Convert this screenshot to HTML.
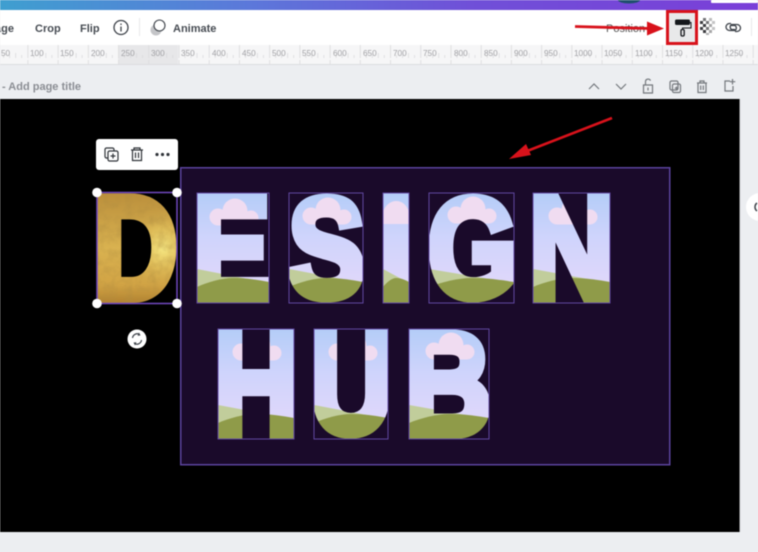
<!DOCTYPE html>
<html><head><meta charset="utf-8"><style>
html,body{margin:0;padding:0;width:758px;height:552px;overflow:hidden;background:#eceef1}
svg{display:block;filter:blur(.5px)}
.t{font-family:"Liberation Sans",sans-serif;font-weight:bold;font-size:11px;fill:#474c53}
.r{font-family:"Liberation Sans",sans-serif;font-size:8.2px;fill:#a0a0a4}
.l{font-family:"Liberation Sans",sans-serif;font-weight:bold;font-size:145px;fill:#fff;stroke:#fff;stroke-width:10;stroke-linejoin:miter;stroke-miterlimit:8}
.ic{fill:none;stroke:#74787d;stroke-width:1.2}
.ib{fill:none;stroke:#3d4249;stroke-width:1.3}
</style></head><body>
<svg width="758" height="552" viewBox="0 0 758 552" xmlns="http://www.w3.org/2000/svg">
<defs>
<linearGradient id="top" x1="0" x2="1" y1="0" y2="0"><stop offset="0" stop-color="#3f9fd0"/><stop offset=".33" stop-color="#5c78da"/><stop offset=".62" stop-color="#7050d8"/><stop offset="1" stop-color="#7a3fd8"/></linearGradient>
<linearGradient id="sky" x1="0" x2="0" y1="0" y2="1"><stop offset="0" stop-color="#b4cdf8"/><stop offset=".4" stop-color="#cfd4fc"/><stop offset="1" stop-color="#e6d9fa"/></linearGradient>
<linearGradient id="goldb" x1="0" x2="0" y1="0" y2="1"><stop offset="0" stop-color="#b88c3a"/><stop offset=".5" stop-color="#d9b250"/><stop offset=".8" stop-color="#d2a445"/><stop offset="1" stop-color="#a97a2c"/></linearGradient>
<radialGradient id="gold" gradientUnits="userSpaceOnUse" cx="163" cy="248" r="42"><stop offset="0" stop-color="#f8ea85"/><stop offset=".5" stop-color="#e6c75f" stop-opacity=".6"/><stop offset="1" stop-color="#c39a42" stop-opacity="0"/></radialGradient>
<filter id="tex" x="0" y="0" width="100%" height="100%"><feTurbulence type="fractalNoise" baseFrequency=".12" numOctaves="3" seed="4"/><feColorMatrix values="0 0 0 0 .42  0 0 0 0 .26  0 0 0 0 .05  .8 0 0 0 -.3"/></filter>
<symbol id="scene" viewBox="0 0 100 110" preserveAspectRatio="none">
<rect width="100" height="110" fill="url(#sky)"/>
<path d="M0 76 L100 90 V110 H0Z" fill="#c1cd9b"/>
<path d="M0 94 C15 89 35 85 50 85 C70 85 85 87 100 89 V110 H0Z" fill="#8f9b49"/>
</symbol>
<g id="cloud"><circle cx="0" cy="0" r="8.5" fill="#f0dcf1"/><circle cx="17" cy="-6" r="12.5" fill="#f0dcf1"/><circle cx="33" cy="1" r="7.5" fill="#f0dcf1"/><rect x="0" y="0" width="33" height="8.5" fill="#f0dcf1"/></g>
<pattern id="tk" x="27.4" y="0" width="30.22" height="20" patternUnits="userSpaceOnUse">
<path d="M.5 0V18" stroke="#dfdfe1" stroke-width="1"/><path d="M6.5 15V18M12.5 15V18M18.5 13V18M24.5 15V18" stroke="#d6d6d9" stroke-width=".7"/></pattern>
<mask id="mD" maskUnits="userSpaceOnUse" x="0" y="0" width="758" height="552"><text class="l" transform="translate(92.5,298) scale(.81,1)">D</text></mask>
<mask id="mE" maskUnits="userSpaceOnUse" x="0" y="0" width="758" height="552"><text class="l" transform="translate(192.5,298) scale(.802,1)">E</text></mask>
<mask id="mS" maskUnits="userSpaceOnUse" x="0" y="0" width="758" height="552"><text class="l" transform="translate(288.5,296.5) scale(.787,.97)">S</text></mask>
<mask id="mI" maskUnits="userSpaceOnUse" x="0" y="0" width="758" height="552"><text class="l" transform="translate(379.5,298) scale(.819,1)">I</text></mask>
<mask id="mG" maskUnits="userSpaceOnUse" x="0" y="0" width="758" height="552"><text class="l" transform="translate(428,296.5) scale(.791,.97)">G</text></mask>
<mask id="mN" maskUnits="userSpaceOnUse" x="0" y="0" width="758" height="552"><text class="l" transform="translate(528,298) scale(.829,1)">N</text></mask>
<mask id="mH" maskUnits="userSpaceOnUse" x="0" y="0" width="758" height="552"><text class="l" transform="translate(213.4,434) scale(.814,1)">H</text></mask>
<mask id="mU" maskUnits="userSpaceOnUse" x="0" y="0" width="758" height="552"><text class="l" transform="translate(309.8,432.5) scale(.79,.985)">U</text></mask>
<mask id="mB" maskUnits="userSpaceOnUse" x="0" y="0" width="758" height="552"><text class="l" transform="translate(404.3,434) scale(.832,1)">B</text></mask>
<clipPath id="cD"><rect x="97" y="193" width="80" height="110"/></clipPath>
</defs>

<rect width="758" height="552" fill="#eceef1"/>
<!-- top bar -->
<rect width="758" height="10" fill="url(#top)"/>
<ellipse cx="629" cy="0" rx="11" ry="3.5" fill="#1f4f6e"/>
<rect x="711" y="0" width="47" height="3" rx="1" fill="#fff"/>
<rect y="10" width="758" height="35" fill="#fff"/>
<text class="t" x="-5" y="32">age</text>
<text class="t" x="35" y="32">Crop</text>
<text class="t" x="80" y="32">Flip</text>
<circle cx="121" cy="27.5" r="7" class="ib"/><path d="M121 26.5V31.5M121 23.5V25" class="ib" stroke-width="1.5"/>
<rect x="139" y="18" width="1" height="18" fill="#e8e8ea"/>
<circle cx="156" cy="30" r="5.5" fill="#c4c5c8"/><circle cx="159.5" cy="25.5" r="5.5" fill="#fff" stroke="#3d4249" stroke-width="1.1"/>
<text class="t" x="173" y="32">Animate</text>
<text class="t" x="606" y="32" style="font-weight:normal;fill:#555">Position</text>
<!-- red box + roller -->
<rect x="667.5" y="11.5" width="29" height="32" fill="#e8e9ea" stroke="#d8121b" stroke-width="3"/>
<rect x="675" y="19.5" width="15" height="5.5" rx="1.5" fill="#15181c"/><path d="M689 22.5H691V28H682.5V30" fill="none" stroke="#15181c" stroke-width="1"/><rect x="681" y="29.5" width="3.2" height="6.5" rx="1.2" fill="none" stroke="#15181c" stroke-width="1.3"/>
<!-- checker -->
<g fill="#3b3b3f"><rect x="700" y="21" width="3" height="3"/><rect x="703" y="24" width="3" height="3"/><rect x="700" y="27" width="3" height="3"/><rect x="703" y="30" width="3" height="3"/><rect x="706" y="21" width="3" height="3" opacity=".7"/><rect x="706" y="27" width="3" height="3" opacity=".7"/><rect x="703" y="18" width="3" height="3" opacity=".7"/><rect x="709" y="24" width="3" height="3" opacity=".45"/><rect x="709" y="30" width="3" height="3" opacity=".45"/><rect x="706" y="33" width="3" height="2" opacity=".4"/><rect x="709" y="18" width="3" height="3" opacity=".35"/><rect x="712" y="21" width="3" height="3" opacity=".3"/><rect x="712" y="27" width="3" height="3" opacity=".3"/></g>
<path d="M731 23.5H729.5a3.5 3.5 0 0 0 0 7H735a3 3 0 0 0 0-5H731M735 31.5H737a3.5 3.5 0 0 0 0-7H731.5a3 3 0 0 0 0 5H735" class="ib" stroke-width="1.3"/>
<rect x="751" y="18" width="1" height="18" fill="#e8e8ea"/>
<!-- red arrow 1 -->
<path d="M575 26.5L650 28.5" stroke="#d8121b" stroke-width="2.8"/>
<path d="M647 21.5L664 28.5L647 35.5Z" fill="#d8121b"/>

<!-- ruler -->
<rect y="45" width="758" height="19" fill="#f6f6f7"/>
<rect x="118" y="45" width="60" height="19" fill="#e7e7e9"/>
<rect y="45" width="758" height="19" fill="url(#tk)"/>
<rect y="64" width="758" height="1" fill="#dcdde0"/>
<g class="r">
<text class="r" x="1" y="56">50</text><text class="r" x="30" y="56">100</text><text class="r" x="60" y="56">150</text><text class="r" x="91" y="56">200</text><text class="r" x="121" y="56">250</text><text class="r" x="151" y="56">300</text><text class="r" x="181" y="56">350</text><text class="r" x="212" y="56">400</text><text class="r" x="242" y="56">450</text><text class="r" x="272" y="56">500</text><text class="r" x="302" y="56">550</text><text class="r" x="333" y="56">600</text><text class="r" x="363" y="56">650</text><text class="r" x="393" y="56">700</text><text class="r" x="423" y="56">750</text><text class="r" x="454" y="56">800</text><text class="r" x="484" y="56">850</text><text class="r" x="514" y="56">900</text><text class="r" x="544" y="56">950</text><text class="r" x="574" y="56">1000</text><text class="r" x="604" y="56">1050</text><text class="r" x="635" y="56">1100</text><text class="r" x="665" y="56">1150</text><text class="r" x="695" y="56">1200</text><text class="r" x="725" y="56">1250</text>
</g>

<!-- page title row -->
<text class="t" x="2" y="90" style="font-size:11px;fill:#8b8e94">- Add page title</text>
<g class="ic">
<path d="M589 89L594 84L599 89"/>
<path d="M616 84L621 89L626 84"/>
<path d="M643.5 85H652.5V93H643.5ZM645.5 85V81.5a2.6 2.6 0 0 1 5-.8M648 87.5V90.5"/>
<rect x="670" y="81" width="8" height="9" rx="1.5"/><rect x="672.5" y="84" width="8" height="8.5" rx="1.5"/><path d="M676.5 86.5V90M674.7 88.2H678.3"/>
<path d="M697 83H707M700 83V81H704V83M698 83V92.5H706V83M700.7 85.5V90M703.3 85.5V90"/>
<path d="M730 81H725V91H733V86M732.5 79V84.5M729.8 81.7H735.3"/>
</g>

<!-- canvas -->
<rect x="0" y="99" width="739.5" height="433" fill="#000"/>
<rect x="739.5" y="99" width="1" height="433" fill="#cfd0d3"/>
<circle cx="760" cy="207" r="14" fill="#fff"/>
<path d="M757 203a5 5 0 0 0 0 8" fill="none" stroke="#3d4249" stroke-width="1.5"/>

<!-- frame -->
<rect x="180.75" y="167.75" width="489" height="297" fill="#1a0a2a" stroke="#5a429c" stroke-width="1.5"/>

<!-- letters row 1 -->
<g mask="url(#mE)"><use href="#scene" x="197" y="193" width="72" height="110"/><use href="#cloud" transform="translate(218,217)"/></g>
<g mask="url(#mS)"><use href="#scene" x="289" y="193" width="74" height="110"/><use href="#cloud" transform="translate(311,216)"/></g>
<g mask="url(#mI)"><use href="#scene" x="383" y="193" width="26" height="110"/><path d="M383 224V212C385 205 391 201 396 201C402 201 407 205 409 212V224Z" fill="#f0dcf1"/></g>
<g mask="url(#mG)"><use href="#scene" x="429" y="193" width="85" height="110"/><use href="#cloud" transform="translate(456,215)"/></g>
<g mask="url(#mN)"><use href="#scene" x="533" y="193" width="77" height="110"/><use href="#cloud" transform="translate(557,216)"/></g>
<g fill="none" stroke="#5f46a0" stroke-width="1">
<rect x="197" y="193" width="72" height="110"/><rect x="289" y="193" width="74" height="110"/><rect x="383" y="193" width="26" height="110"/><rect x="429" y="193" width="85" height="110"/><rect x="533" y="193" width="77" height="110"/>
</g>
<!-- letters row 2 -->
<g mask="url(#mH)"><use href="#scene" x="218" y="329" width="76" height="110"/><use href="#cloud" transform="translate(241,352)"/></g>
<g mask="url(#mU)"><use href="#scene" x="314" y="329" width="74" height="110"/><use href="#cloud" transform="translate(337,352)"/></g>
<g mask="url(#mB)"><use href="#scene" x="409" y="329" width="80" height="110"/><use href="#cloud" transform="translate(434,351)"/></g>
<g fill="none" stroke="#5f46a0" stroke-width="1">
<rect x="218" y="329" width="76" height="110"/><rect x="314" y="329" width="74" height="110"/><rect x="409" y="329" width="80" height="110"/>
</g>

<!-- gold D -->
<g mask="url(#mD)"><g clip-path="url(#cD)"><rect x="90" y="188" width="95" height="120" fill="url(#goldb)"/><rect x="90" y="188" width="95" height="120" fill="url(#gold)"/><rect x="90" y="188" width="95" height="120" filter="url(#tex)"/></g></g>
<rect x="97" y="192.5" width="80" height="111" fill="none" stroke="#7048c0" stroke-width="1.5"/>
<g fill="#fff"><circle cx="97" cy="192.5" r="4.8"/><circle cx="177" cy="192.5" r="4.8"/><circle cx="97" cy="303.5" r="4.8"/><circle cx="177" cy="303.5" r="4.8"/></g>

<!-- popup -->
<rect x="96" y="139" width="82" height="31" rx="3" fill="#fff"/>
<g fill="none" stroke="#2f3338" stroke-width="1.2">
<rect x="105" y="148" width="9" height="10" rx="1.5"/><rect x="108" y="151" width="10" height="10" rx="1.5" fill="#fff"/><path d="M113 153.5V158.5M110.5 156H115.5"/>
<path d="M131 150H143M134 150V148H140V150M132.5 150V160.5H141.5V150M135.5 152.5V158M138.5 152.5V158"/>
</g>
<g fill="#2f3338"><circle cx="157" cy="154.5" r="1.6"/><circle cx="162.5" cy="154.5" r="1.6"/><circle cx="168" cy="154.5" r="1.6"/></g>

<!-- rotate -->
<circle cx="137" cy="339" r="9.5" fill="#fff"/>
<path d="M132.5 338a4.7 4.7 0 0 1 7-3.6M141.5 340a4.7 4.7 0 0 1-7 3.6" fill="none" stroke="#3d4249" stroke-width="1.2"/>
<path d="M139 332.5L140.5 335.5L137.5 335.8ZM135 345.5L133.5 342.5L136.5 342.2Z" fill="#3d4249"/>

<!-- red arrow 2 -->
<path d="M612 118L522 153" stroke="#d8121b" stroke-width="2.6"/>
<path d="M509 159L526 144L531 155Z" fill="#d8121b"/>
</svg>
</body></html>
